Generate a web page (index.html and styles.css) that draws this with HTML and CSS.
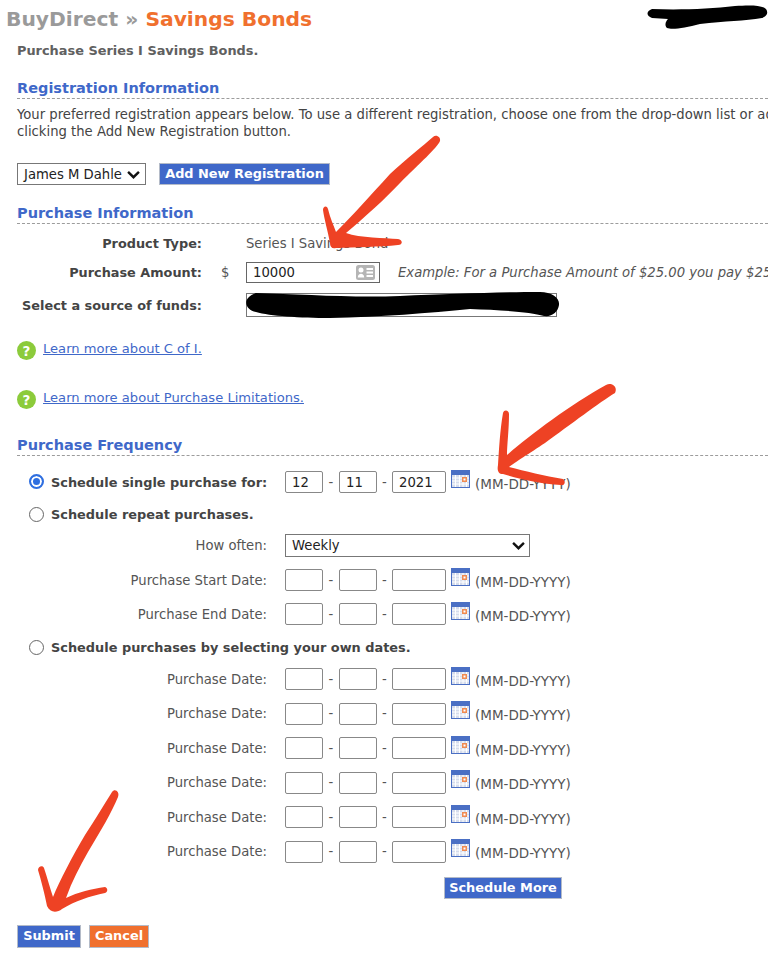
FILE: index.html
```html
<!DOCTYPE html>
<html lang="en">
<head>
<meta charset="utf-8">
<title>BuyDirect Savings Bonds</title>
<link rel="stylesheet" href="styles.css">
</head>
<body>
<svg width="0" height="0" class="defs">
  <symbol id="cal" viewBox="0 0 19 18">
    <rect width="19" height="18" fill="#4a6fc4"/>
    <rect x="1" y="5" width="17" height="12" fill="#d5dcec"/>
    <path d="M1 8h17M1 11h17M1 14h17M4.500 5v12M8.500 5v12M12 5v12M15.500 5v12" stroke="#fff" stroke-width="1"/>
    <rect x="11" y="7" width="5" height="5" fill="#f08a50"/>
    <rect x="12.500" y="8.500" width="2" height="2" fill="#fff"/>
  </symbol>
</svg>
<main class="page">
  <h1 class="title"><span class="crumb">BuyDirect »</span> <span class="current">Savings Bonds</span></h1>
  <p class="lead">Purchase Series I Savings Bonds.</p>

  <h2 class="section sec-reg">Registration Information</h2>
  <p class="intro">Your preferred registration appears below. To use a different registration, choose one from the drop-down list or add one by<br>clicking the Add New Registration button.</p>
  <div class="reg-row">
    <div class="select sel-name"><span>James M Dahle</span><svg class="chev" viewBox="0 0 12 8"><path d="M1 1.500l5 5 5-5" /></svg></div>
    <button class="btn blue btn-add">Add New Registration</button>
  </div>

  <h2 class="section sec-pur">Purchase Information</h2>
  <div class="info-grid">
    <div class="info-label">Product Type:</div><div></div><div class="info-value">Series I Savings Bond</div>
    <div class="info-label">Purchase Amount:</div><div class="dollar">$</div>
    <div class="amount-wrap">
      <div class="field amount"><span>10000</span>
        <svg class="contact" viewBox="0 0 19 15"><rect width="19" height="15" rx="2.500" fill="#b5b5b5"/><circle cx="5" cy="5" r="2.500" fill="#fff"/><path d="M1.800 12.500c0-5 6.400-5 6.400 0zM10.500 3h6.500v2h-6.500zM10.500 6.500h6.500v2h-6.500zM10.500 10h6.500v2h-6.500z" fill="#fff"/></svg>
      </div>
      <em class="example">Example: For a Purchase Amount of $25.00 you pay $25.00</em>
    </div>
    <div class="info-label">Select a source of funds:</div><div></div><div class="select sel-funds"></div>
  </div>

  <p class="help help-one"><span class="help-icon">?</span><a href="#">Learn more about C of I.</a></p>
  <p class="help help-two"><span class="help-icon">?</span><a href="#">Learn more about Purchase Limitations.</a></p>

  <h2 class="section sec-freq">Purchase Frequency</h2>

  <div class="radio-row first">
    <span class="radio on"></span><strong>Schedule single purchase for:</strong>
    <div class="date">
      <span class="field mm">12</span><i>-</i><span class="field dd">11</span><i>-</i><span class="field yy">2021</span>
      <svg class="cal"><use href="#cal"/></svg><span class="fmt">(MM-DD-YYYY)</span>
    </div>
  </div>
  <div class="radio-row second"><span class="radio"></span><strong>Schedule repeat purchases.</strong></div>

  <div class="row often"><label>How often:</label><div class="select sel-often"><span>Weekly</span><svg class="chev" viewBox="0 0 12 8"><path d="M1 1.500l5 5 5-5" /></svg></div></div>
  <div class="row start"><label>Purchase Start Date:</label><div class="date"><span class="field mm"></span><i>-</i><span class="field dd"></span><i>-</i><span class="field yy"></span><svg class="cal"><use href="#cal"/></svg><span class="fmt">(MM-DD-YYYY)</span></div></div>
  <div class="row end"><label>Purchase End Date:</label><div class="date"><span class="field mm"></span><i>-</i><span class="field dd"></span><i>-</i><span class="field yy"></span><svg class="cal"><use href="#cal"/></svg><span class="fmt">(MM-DD-YYYY)</span></div></div>

  <div class="radio-row third"><span class="radio"></span><strong>Schedule purchases by selecting your own dates.</strong></div>

  <div class="own-dates">
    <div class="row"><label>Purchase Date:</label><div class="date"><span class="field mm"></span><i>-</i><span class="field dd"></span><i>-</i><span class="field yy"></span><svg class="cal"><use href="#cal"/></svg><span class="fmt">(MM-DD-YYYY)</span></div></div>
    <div class="row"><label>Purchase Date:</label><div class="date"><span class="field mm"></span><i>-</i><span class="field dd"></span><i>-</i><span class="field yy"></span><svg class="cal"><use href="#cal"/></svg><span class="fmt">(MM-DD-YYYY)</span></div></div>
    <div class="row"><label>Purchase Date:</label><div class="date"><span class="field mm"></span><i>-</i><span class="field dd"></span><i>-</i><span class="field yy"></span><svg class="cal"><use href="#cal"/></svg><span class="fmt">(MM-DD-YYYY)</span></div></div>
    <div class="row"><label>Purchase Date:</label><div class="date"><span class="field mm"></span><i>-</i><span class="field dd"></span><i>-</i><span class="field yy"></span><svg class="cal"><use href="#cal"/></svg><span class="fmt">(MM-DD-YYYY)</span></div></div>
    <div class="row"><label>Purchase Date:</label><div class="date"><span class="field mm"></span><i>-</i><span class="field dd"></span><i>-</i><span class="field yy"></span><svg class="cal"><use href="#cal"/></svg><span class="fmt">(MM-DD-YYYY)</span></div></div>
    <div class="row"><label>Purchase Date:</label><div class="date"><span class="field mm"></span><i>-</i><span class="field dd"></span><i>-</i><span class="field yy"></span><svg class="cal"><use href="#cal"/></svg><span class="fmt">(MM-DD-YYYY)</span></div></div>
  </div>

  <div class="more-row"><button class="btn blue btn-more">Schedule More</button></div>
  <div class="actions"><button class="btn blue btn-submit">Submit</button><button class="btn orange btn-cancel">Cancel</button></div>
</main>

<svg class="marks" viewBox="0 0 768 966" aria-hidden="true">
  <g fill="#000">
    <path d="M652 9C680 10 710 9 735 6C750 5 762 5 766 9C769 13 766 17 762 18C745 21 725 21 700 24C685 28 672 30 667 28C664 25 666 21 668 19L652 18C646 16 646 11 652 9Z"/>
    <path d="M256 293C300 294 350 298 400 296C450 294 500 292 540 292C552 292 560 298 559 305C558 312 552 317 544 316C530 312 500 310 470 309C430 313 380 317 330 318C300 318 270 316 256 312C245 310 241 298 256 293Z"/>
  </g>
  <g fill="#ee4224">
    <path d="M433 137C436 134 441 137 440 141C437 148 420 163 400 183C385 199 365 217 346 233C360 238 385 238 398 239C403 240 403 245 398 245C380 247 355 247 336 248C332 249 330 247 330 243C328 232 324 218 323 210C323 206 327 205 328 209C330 218 334 226 336 232C352 216 370 196 390 174C405 160 424 145 433 137Z"/>
    <path d="M606 385C612 382 618 387 615 393C600 402 570 425 545 443C530 453 514 463 509 467C525 471 545 476 563 479C566 481 565 486 561 485C540 484 520 479 503 474C498 474 497 470 498 465C499 450 500 430 503 413C504 409 509 410 509 414C509 430 507 445 507 455C530 435 570 405 606 385Z"/>
    <path d="M112 792C115 788 120 792 118 797C112 812 100 832 88 852C80 866 72 881 66 898C78 892 92 889 105 887C108 888 108 892 105 893C90 896 75 901 62 909C57 913 50 913 47 906C45 895 41 880 38 870C38 866 43 865 44 868C47 877 50 888 53 897C60 880 72 857 85 835C95 820 105 803 112 792Z"/>
  </g>
</svg>
</body>
</html>
```

FILE: styles.css
```css
* { box-sizing: border-box; }
html, body { margin: 0; padding: 0; }
html { overflow: hidden; }
body {
  width: 768px;
  height: 966px;
  overflow: hidden;
  position: relative;
  background: #fff;
  color: #444;
  font-family: "DejaVu Sans", Verdana, sans-serif;
  font-size: 13.200px;
}
.defs { position: absolute; }
.page { padding: 0 0 0 17px; width: 768px; height: 966px; overflow: hidden; }

.title {
  margin: 0 0 0 -11px;
  padding-top: 6px;
  height: 41px;
  font-size: 20.250px;
  line-height: 26px;
  font-weight: 700;
  white-space: nowrap;
}
.crumb { color: #9a9a9a; }
.current { color: #f0702e; }
.lead { margin: 0; height: 36px; line-height: 20px; font-weight: 700; font-size: 12.900px; color: #606060; }

.section {
  margin: 0;
  height: 21px;
  line-height: 20px;
  font-size: 14.500px;
  font-weight: 700;
  color: #3f68c9;
  border-bottom: 1px dashed #9c9c9c;
  white-space: nowrap;
}
.sec-reg { margin-top: 1px; }
.intro {
  margin: 7px 0 0;
  height: 57px;
  line-height: 17px;
  white-space: nowrap;
  color: #444;
}
.reg-row { display: flex; gap: 13px; height: 39px; align-items: flex-start; }

.select {
  display: flex;
  align-items: center;
  justify-content: space-between;
  border: 1px solid #777;
  background: #fff;
  color: #222;
  padding: 0 5px 0 6px;
}
.sel-name { width: 129px; height: 22px; }
.chev { width: 13px; height: 9px; fill: none; stroke: #111; stroke-width: 2.200; }

.btn {
  font-family: "DejaVu Sans", Verdana, sans-serif;
  font-weight: 700;
  font-size: 12.900px;
  color: #fff;
  border: 1px solid #b4bbc8;
  padding: 0;
  height: 22px;
  line-height: 20px;
}
.blue { background: #3f68c9; }
.orange { background: #f0702e; }
.btn-add { width: 171px; }

.sec-pur { margin-top: 1px; }
.info-grid {
  display: grid;
  grid-template-columns: 185px 44px 1fr;
  grid-template-rows: 21px 37px 29px;
  padding-top: 9px;
  align-items: center;
}
.info-label { text-align: right; font-weight: 700; font-size: 12.850px; color: #444; white-space: nowrap; }
.info-value { color: #555; white-space: nowrap; }
.dollar { padding-left: 19px; color: #555; }
.amount-wrap { display: flex; align-items: center; gap: 18px; white-space: nowrap; }
.example { color: #555; }

.field {
  display: flex;
  align-items: center;
  border: 1px solid #888;
  border-radius: 2px;
  background: #fff;
  color: #222;
  padding-left: 6px;
  height: 22px;
  flex: none;
}
.amount { width: 134px; height: 21px; justify-content: space-between; padding-right: 4px; border-color: #666; border-radius: 0; }
.contact { width: 19px; height: 15px; }
.sel-funds { width: 311px; height: 24px; margin-top: -2px; }

.help { margin: 0; display: flex; align-items: flex-start; gap: 7px; height: 49px; }
.help-one { margin-top: 21px; }
.help-icon {
  width: 19px;
  height: 19px;
  flex: none;
  display: flex;
  align-items: center;
  justify-content: center;
  border-radius: 50%;
  background: #8ccb3b;
  color: #fff;
  font-size: 13.500px;
  font-weight: 700;
}
.help a { color: #3f68c9; font-size: 13.100px; line-height: 16px; text-decoration: underline; white-space: nowrap; }
.help-two { height: 45px; }

.radio-row { display: flex; align-items: center; height: 24px; white-space: nowrap; padding-left: 12px; }
.radio-row strong { color: #444; font-size: 12.900px; margin-left: 7px; }
.first { margin-top: 15px; height: 22px; }
.first .radio { margin-top: -2px; }
.first strong { width: 234px; }
.second { margin-top: 9px; }
.third { margin-top: 10px; }
.radio {
  width: 15px;
  height: 15px;
  border-radius: 50%;
  border: 1px solid #666;
  background: #fff;
  flex: none;
}
.radio.on { border: 2px solid #2f6fe0; box-shadow: inset 0 0 0 2px #fff; background: #2f6fe0; }

.row { display: flex; align-items: center; height: 22px; white-space: nowrap; }
.row label { width: 250px; text-align: right; color: #555; flex: none; margin-right: 18px; }
.often { margin-top: 7px; height: 24px; }
.sel-often { width: 245px; height: 23px; padding-right: 4px; }
.start { margin-top: 12px; }
.end { margin-top: 12px; }

.date { display: flex; align-items: center; }
.date i { font-style: normal; width: 16px; text-align: center; color: #555; flex: none; }
.date .dd + i { width: 15px; }
.mm, .dd { width: 38px; }
.yy { width: 54px; }
.cal { width: 19px; height: 18px; margin: -7px 5px 0 5px; flex: none; }
.fmt { color: #555; font-size: 13.500px; margin-top: 3px; }

.own-dates { display: flex; flex-direction: column; gap: 12.600px; margin-top: 9px; }

.more-row { display: flex; padding-left: 427px; margin-top: 14px; }
.btn-more { width: 118px; }
.actions { display: flex; gap: 8px; margin-top: 26px; }
.btn-submit { width: 64px; height: 23px; }
.btn-cancel { width: 60px; height: 23px; }

.marks { position: absolute; left: 0; top: 0; width: 768px; height: 966px; pointer-events: none; }
```
